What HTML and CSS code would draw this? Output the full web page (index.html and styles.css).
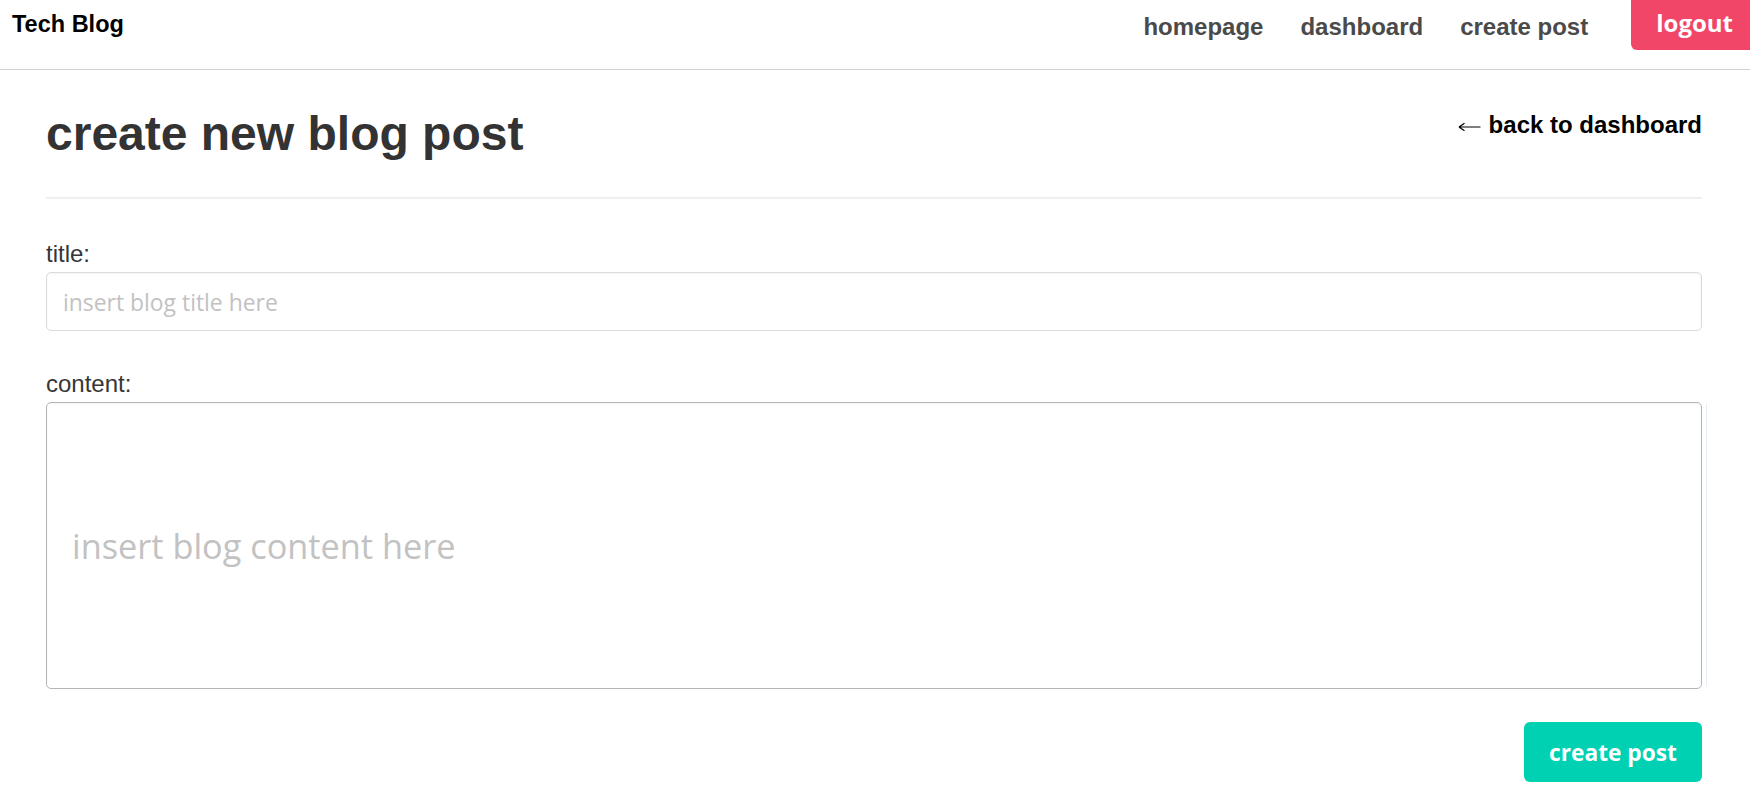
FILE: index.html
```html
<!DOCTYPE html>
<html lang="en">
<head>
<meta charset="utf-8">
<title>Tech Blog</title>
<link rel="stylesheet" href="styles.css">
</head>
<body>
<header class="topbar">
  <a class="brand" href="#">Tech Blog</a>
  <nav class="nav">
    <a class="nav-link" href="#">homepage</a>
    <a class="nav-link" href="#">dashboard</a>
    <a class="nav-link" href="#">create post</a>
    <button class="logout" type="button">logout</button>
  </nav>
</header>
<main class="page">
  <div class="page-head">
    <h1 class="page-title">create new blog post</h1>
    <a class="back-link" href="#"><svg class="arrow" width="24" height="10" viewBox="0 0 24 10" aria-hidden="true"><path d="M1 5H22.5M1 5L6.5 1.2M1 5L6.5 8.8" fill="none" stroke="#000" stroke-width="1.2"/></svg> back to dashboard</a>
  </div>
  <div class="divider"></div>
  <form class="post-form">
    <label class="field-label" for="title">title:</label>
    <input class="title-input" id="title" type="text" placeholder="insert blog title here">
    <label class="field-label content-label" for="content">content:</label>
    <div class="content-row">
      <textarea class="content-input" id="content" placeholder="insert blog content here"></textarea>
      <div class="edge-line"></div>
    </div>
    <div class="actions">
      <button class="submit" type="button">create post</button>
    </div>
  </form>
</main>
</body>
</html>
```
FILE: styles.css
```css
* { box-sizing: border-box; }

body {
  margin: 0;
  font-family: "Liberation Sans", Arial, sans-serif;
  background: #fff;
  color: #363636;
}

a { text-decoration: none; }

.topbar {
  display: flex;
  justify-content: space-between;
  align-items: flex-start;
  height: 70px;
  border-bottom: 1px solid #d0d0d0;
}

.brand {
  padding: 11px 0 0 12px;
  font-size: 23.5px;
  font-weight: 700;
  color: #000;
  line-height: 26px;
}

.nav {
  display: flex;
  align-items: flex-start;
  gap: 37px;
}

.nav-link {
  margin-top: 13px;
  font-size: 24px;
  font-weight: 700;
  color: #4a4a4a;
  line-height: 27px;
}

.logout {
  margin-left: 6px;
  height: 50px;
  padding: 6px 17px 0 25px;
  border: none;
  border-radius: 0 0 0 6px;
  background: #f14668;
  color: #fff;
  font-family: "Open Sans", sans-serif;
  font-size: 24px;
  font-weight: 700;
  line-height: normal;
  display: flex;
  align-items: flex-start;
  cursor: pointer;
}

.page {
  margin: 0 48px 0 46px;
}

.page-head {
  display: flex;
  justify-content: space-between;
  align-items: flex-start;
  padding: 36px 0 36px;
}

.page-title {
  margin: 0;
  font-size: 48px;
  font-weight: 700;
  color: #333;
  line-height: 55px;
}

.back-link {
  margin-top: 5px;
  font-size: 24px;
  font-weight: 700;
  color: #000;
  line-height: 27px;
}

.arrow {
  vertical-align: 1px;
}

.divider {
  height: 2px;
  background: #f0f0f0;
}

.post-form {
  display: flex;
  flex-direction: column;
  padding-top: 41px;
}

.field-label {
  font-size: 24px;
  line-height: 27px;
  color: #363636;
  margin-bottom: 5px;
}

.content-label {
  margin-top: 39px;
}

.title-input {
  height: 59px;
  width: 100%;
  padding: 2px 16px 0;
  border: 1px solid #dbdbdb;
  border-radius: 5px;
  box-shadow: inset 0 1px 2px rgba(10, 10, 10, 0.05);
  font-family: "Open Sans", sans-serif;
  font-size: 22.9px;
  color: #363636;
  outline: none;
}

.title-input::placeholder { color: #c2c2c2; }

.content-row {
  display: flex;
  margin-right: -5px;
}

.content-input {
  flex: 1;
  height: 287px;
  padding: 119px 25px 0;
  border: 1px solid #b5b5b5;
  border-radius: 5px;
  box-shadow: inset 0 1px 2px rgba(10, 10, 10, 0.05);
  font-family: "Open Sans", sans-serif;
  font-size: 34.3px;
  color: #363636;
  resize: none;
  outline: none;
}

.content-input::placeholder { color: #c2c2c2; }

.edge-line {
  width: 1px;
  margin: 1px 0 3px 4px;
  background: #e6eef9;
}

.actions {
  display: flex;
  justify-content: flex-end;
  padding-top: 33px;
}

.submit {
  width: 178px;
  height: 60px;
  border: none;
  border-radius: 6px;
  background: #00d1b2;
  color: #fff;
  font-family: "Open Sans", sans-serif;
  font-size: 22.7px;
  font-weight: 700;
  cursor: pointer;
}
```
